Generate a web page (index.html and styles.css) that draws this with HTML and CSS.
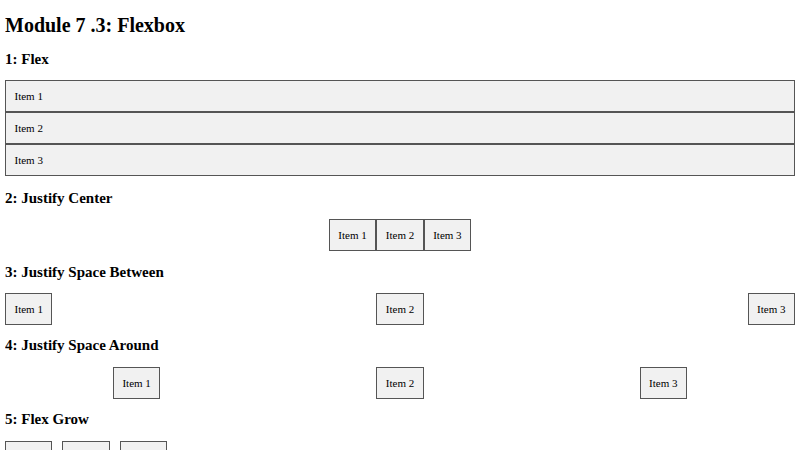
FILE: index.html
```html
<!DOCTYPE html>
<html lang="en">
<head>
  <meta charset="UTF-8">
  <title>Module 7.3: Flexbox</title>
  <link rel="stylesheet" href="styles.css">
</head>
<body>

  <h1>Module 7 .3: Flexbox</h1>

  <h2>1: Flex</h2>
  <div class="container flex-col">
    <div class="item">Item 1</div>
    <div class="item">Item 2</div>
    <div class="item">Item 3</div>
  </div>

  <h2>2: Justify Center</h2>
  <div class="container justify-center">
    <div class="item">Item 1</div>
    <div class="item">Item 2</div>
    <div class="item">Item 3</div>
  </div>

  <h2>3: Justify Space Between</h2>
  <div class="container justify-between">
    <div class="item">Item 1</div>
    <div class="item">Item 2</div>
    <div class="item">Item 3</div>
  </div>

  <h2>4: Justify Space Around</h2>
  <div class="container justify-around">
    <div class="item">Item 1</div>
    <div class="item">Item 2</div>
    <div class="item">Item 3</div>
  </div>

  <h2>5: Flex Grow</h2>
  <div class="container grow-demo">
    <div class="item">Item 1</div>
    <div class="item">Item 2</div>
    <div class="item">Item 3</div>
  </div>

</body>
</html>
```

FILE: styles.css
```css
body {
  font-family: "Liberation Serif", "Times New Roman", serif;
  margin: 0 5px;
  padding-top: 1px;
  color: #000;
}

h1 {
  font-size: 20px;
}

h2 {
  font-size: 15px;
}

.container {
  display: flex;
}

.item {
  background: #f1f1f1;
  border: 1px solid #555;
  padding: 9px 8.5px;
  font-size: 11px;
  line-height: 12px;
}

.flex-col {
  flex-direction: column;
  padding-bottom: 1px;
}

.justify-center {
  justify-content: center;
}

.justify-between {
  justify-content: space-between;
}

.justify-around {
  justify-content: space-around;
}

.grow-demo {
  gap: 10px;
}
```
